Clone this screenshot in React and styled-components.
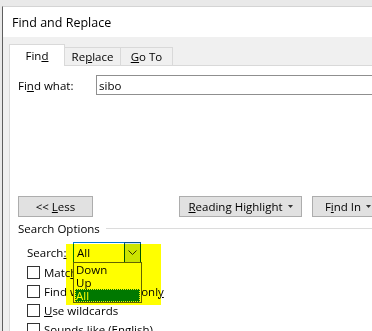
import React from 'react';
import styled, { createGlobalStyle } from 'styled-components';

const GlobalStyle = createGlobalStyle`
  html, body {
    margin: 0;
    padding: 0;
  }
  body {
    width: 372px;
    height: 331px;
    overflow: hidden;
    background: #e9e9e9;
    font-family: 'Open Sans', 'Noto Sans', sans-serif;
    font-size: 11.5px;
    color: #000;
  }
`;

const Screen = styled.div`
  box-sizing: border-box;
  height: 331px;
  padding: 6px 0 0 2px;
  overflow: hidden;
`;

const Window = styled.div`
  width: 420px;
  height: 100%;
  display: flex;
  flex-direction: column;
  border-left: 1px solid #5f5f5f;
  border-top: 1px solid #d4d4d4;
  background: #f0f0f0;
`;

const TitleBar = styled.div`
  height: 30px;
  flex: none;
  display: flex;
  align-items: center;
  padding-left: 9px;
  background: #fff;
  font-size: 12.5px;
`;

const Body = styled.div`
  flex: 1;
  display: flex;
  flex-direction: column;
  padding: 7px 0 0 6px;
`;

const TabStrip = styled.div`
  display: flex;
  align-items: flex-end;
  margin-bottom: -1px;
  position: relative;
  z-index: 1;
`;

const Tab = styled.div`
  box-sizing: border-box;
  width: ${(p) => p.$w}px;
  height: ${(p) => (p.$active ? 22 : 19)}px;
  margin-left: ${(p) => (p.$first ? 0 : -1)}px;
  display: flex;
  align-items: center;
  justify-content: center;
  border: 1px solid #d9d9d9;
  border-bottom: ${(p) => (p.$active ? 'none' : '1px solid #d9d9d9')};
  background: ${(p) => (p.$active ? '#fff' : '#f0f0f0')};
  padding-bottom: ${(p) => (p.$active ? 1 : 0)}px;
`;

const Panel = styled.div`
  flex: 1;
  display: flex;
  flex-direction: column;
  padding: 9px 0 0 8px;
  background: #fff;
  border: 1px solid #d9d9d9;
  border-right: none;
`;

const FieldRow = styled.div`
  display: flex;
  align-items: center;
  height: 20px;
`;

const FieldLabel = styled.span`
  width: 78px;
`;

const TextBox = styled.div`
  box-sizing: border-box;
  flex: 1;
  height: 20px;
  display: flex;
  align-items: center;
  padding-left: 2px;
  border: 1px solid #8f8f8f;
  border-right: none;
`;

const ButtonRow = styled.div`
  display: flex;
  margin-top: 101px;
`;

const Button = styled.div`
  box-sizing: border-box;
  width: ${(p) => p.$w}px;
  height: 21px;
  margin-left: ${(p) => p.$ml || 0}px;
  display: flex;
  align-items: center;
  justify-content: center;
  gap: 5px;
  background: #e1e1e1;
  border: 1px solid #adadad;
`;

const Caret = () => (
  <svg width="5" height="3" viewBox="0 0 5 3">
    <path d="M0 0H5L2.5 3Z" fill="#333" />
  </svg>
);

const GroupHeading = styled.div`
  display: flex;
  align-items: center;
  height: 16px;
  margin-top: 3px;
  &::after {
    content: '';
    flex: 1;
    height: 1px;
    margin-left: 6px;
    background: #dcdcdc;
  }
`;

const Options = styled.div`
  position: relative;
  margin-top: 6px;
  padding-left: 9px;
`;

const SearchRow = styled.div`
  display: flex;
  align-items: center;
  height: 21px;
`;

const SearchLabel = styled.span`
  width: 46px;
`;

const Combo = styled.div`
  box-sizing: border-box;
  position: relative;
  width: 68px;
  height: 21px;
  display: flex;
  align-items: center;
  padding-left: 3px;
  border: 1px solid #0078d7;
  background: #fff;
`;

const ComboButton = styled.div`
  box-sizing: border-box;
  position: absolute;
  right: -1px;
  top: -1px;
  width: 17px;
  height: 21px;
  display: flex;
  align-items: center;
  justify-content: center;
  background: #cce4f7;
  border: 1px solid #005499;
`;

const ListBox = styled.div`
  box-sizing: border-box;
  position: absolute;
  left: -1px;
  top: 19px;
  width: 69px;
  padding: 0 1px;
  border: 1px solid #646464;
  background: #fff;
  z-index: 2;
`;

const ListItem = styled.div`
  box-sizing: border-box;
  height: 13px;
  display: flex;
  align-items: center;
  padding-left: 1px;
  background: ${(p) => (p.$selected ? '#0078d7' : 'transparent')};
  color: ${(p) => (p.$selected ? '#fff' : '#000')};
  outline: ${(p) => (p.$selected ? '1px dotted #f2f2f2' : 'none')};
  outline-offset: -1px;
`;

const CheckRow = styled.div`
  display: flex;
  align-items: center;
  height: 19px;
  &:first-of-type {
    margin-top: 3px;
  }
`;

const CheckBox = styled.span`
  box-sizing: border-box;
  width: 13px;
  height: 13px;
  margin-right: 4px;
  border: 1px solid #333;
  background: #fff;
`;

const Highlight = styled.div`
  position: absolute;
  left: 48px;
  top: 2px;
  width: 95px;
  height: 61px;
  background: #ffff00;
  mix-blend-mode: multiply;
  pointer-events: none;
  z-index: 3;
`;

const App = () => {
  return (
    <>
      <GlobalStyle />
      <Screen>
        <Window>
          <TitleBar>Find and Replace</TitleBar>
          <Body>
            <TabStrip>
              <Tab $w={56} $first $active>
                <span>
                  Fin<u>d</u>
                </span>
              </Tab>
              <Tab $w={57}>
                <span>
                  Re<u>p</u>lace
                </span>
              </Tab>
              <Tab $w={53}>
                <span>
                  <u>G</u>o To
                </span>
              </Tab>
            </TabStrip>
            <Panel>
              <FieldRow>
                <FieldLabel>
                  Fi<u>n</u>d what:
                </FieldLabel>
                <TextBox>sibo</TextBox>
              </FieldRow>
              <ButtonRow>
                <Button $w={75}>
                  <span>
                    {'<< '}
                    <u>L</u>ess
                  </span>
                </Button>
                <Button $w={123} $ml={86}>
                  <span>
                    <u>R</u>eading Highlight
                  </span>
                  <Caret />
                </Button>
                <Button $w={72} $ml={10}>
                  <span>
                    F<u>i</u>nd In
                  </span>
                  <Caret />
                </Button>
              </ButtonRow>
              <GroupHeading>Search Options</GroupHeading>
              <Options>
                <SearchRow>
                  <SearchLabel>
                    Search<u>:</u>
                  </SearchLabel>
                  <Combo>
                    All
                    <ComboButton>
                      <svg width="9" height="5" viewBox="0 0 9 5">
                        <path d="M0.5 0.5L4.5 4.5L8.5 0.5" fill="none" stroke="#333" />
                      </svg>
                    </ComboButton>
                    <ListBox>
                      <ListItem>Down</ListItem>
                      <ListItem>Up</ListItem>
                      <ListItem $selected>All</ListItem>
                    </ListBox>
                  </Combo>
                </SearchRow>
                <CheckRow>
                  <CheckBox />
                  <span>
                    Matc<u>h</u> case
                  </span>
                </CheckRow>
                <CheckRow>
                  <CheckBox />
                  <span>
                    Find whole words onl<u>y</u>
                  </span>
                </CheckRow>
                <CheckRow>
                  <CheckBox />
                  <span>
                    <u>U</u>se wildcards
                  </span>
                </CheckRow>
                <CheckRow>
                  <CheckBox />
                  <span>
                    Sounds li<u>k</u>e (English)
                  </span>
                </CheckRow>
                <Highlight />
              </Options>
            </Panel>
          </Body>
        </Window>
      </Screen>
    </>
  );
};

export default App;
